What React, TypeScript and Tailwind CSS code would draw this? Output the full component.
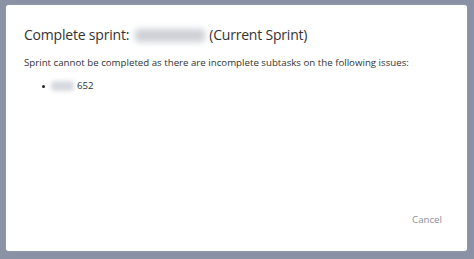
import React from "react";

const App = () => {
  return (
    <div
      className="w-[474px] h-[259px] bg-[#8a93a6] pt-[5px] pl-[6px] pr-[7px] pb-[8px]"
      style={{ fontFamily: '"Open Sans", "Noto Sans", sans-serif' }}
    >
      <div className="h-full bg-white rounded-[3px] flex flex-col px-[18px] pt-[20px] pb-[24px] shadow-[0_0_1px_rgba(255,255,255,0.6)]">
        {/* Header */}
        <h2 className="text-[14px] leading-[20px] tracking-[-0.2px] text-[#333] flex items-center">
          <span>Complete sprint:</span>
          <span className="ml-[6px] mr-[4px] inline-block w-[70px] h-[13px] bg-[#cdd0d6] rounded-sm blur-[3px]"></span>
          <span>(Current Sprint)</span>
        </h2>

        {/* Body */}
        <p className="mt-[11px] text-[9.7px] leading-[14px] text-[#333]">
          Sprint cannot be completed as there are incomplete subtasks on the following issues:
        </p>
        <ul className="mt-[9px] pl-[18px] text-[9.7px] leading-[14px] text-[#333]">
          <li className="flex items-center">
            <span className="w-[3px] h-[3px] rounded-full bg-[#222] mr-[6px]"></span>
            <span className="inline-block w-[23px] h-[10px] bg-[#d6d9de] rounded-sm blur-[2px] mr-[3px]"></span>
            <span>652</span>
          </li>
        </ul>

        {/* Footer */}
        <div className="mt-auto flex justify-end pr-[7px]">
          <button className="text-[9.7px] leading-[14px] text-[#8a8f99]">Cancel</button>
        </div>
      </div>
    </div>
  );
};

export default App;
